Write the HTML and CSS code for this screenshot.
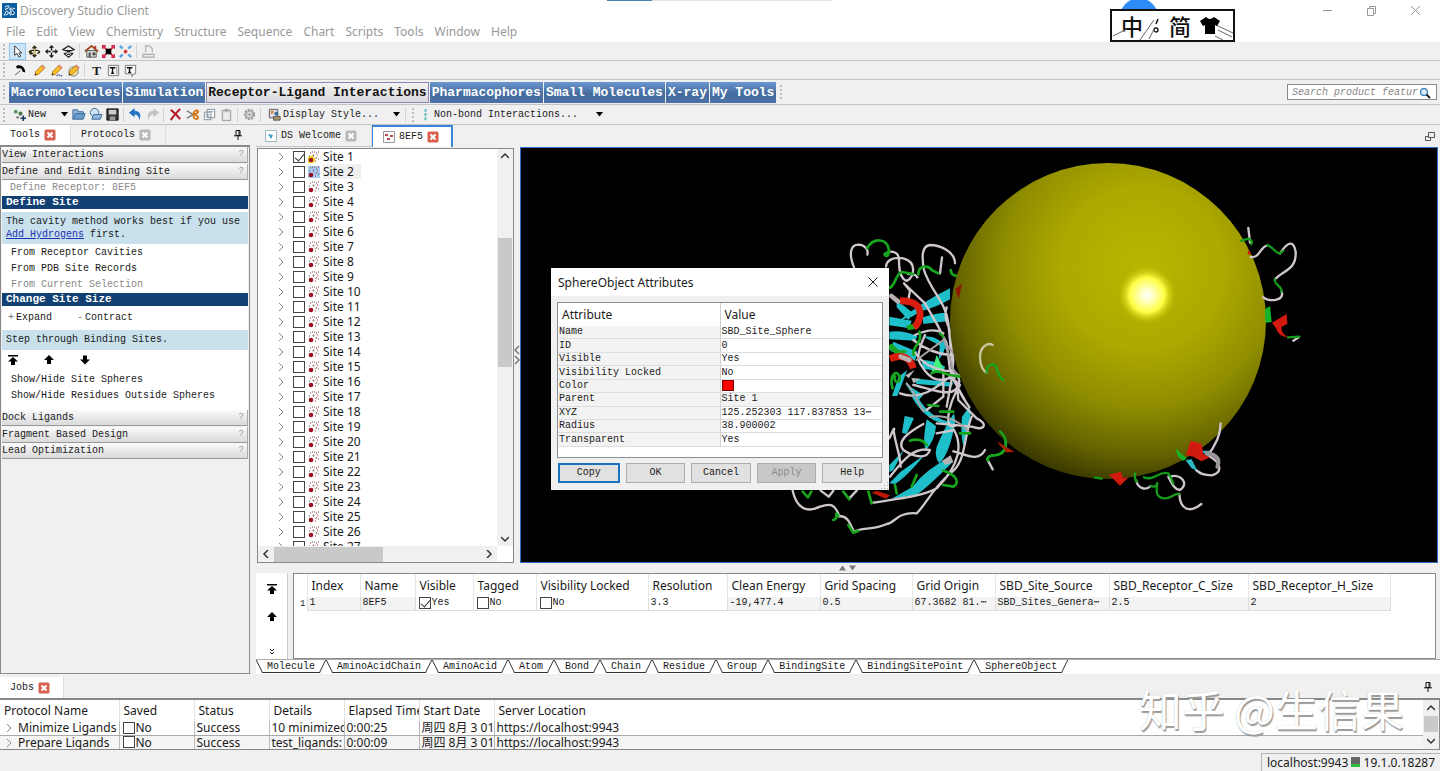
FILE: index.html
```html
<!DOCTYPE html>
<html lang="en">
<head>
<meta charset="utf-8">
<title>Discovery Studio Client</title>
<link rel="stylesheet" href="styles.css">
</head>
<body>
<svg class="defs" aria-hidden="true">
  <symbol id="site" viewBox="0 0 12 12"><circle cx="3" cy="9" r="2.3" fill="#9b1020"/><path d="M5 6l4-4M7 8l3-3M4 4l3 3" stroke="#9a9a9a" stroke-width="1" stroke-dasharray="1 1"/><path d="M2 2h1M6 1h1M9 4h1M5 4h1M8 7h1M7 10h1M10 1h1" stroke="#a33" stroke-width="1"/><path d="M4 1h1M1 5h1M8 2h1M10 8h1" stroke="#555" stroke-width="1"/></symbol>
  <symbol id="close" viewBox="0 0 12 12"><rect x=".5" y=".5" width="11" height="11" rx="1.5" fill="currentColor"/><path d="M3.5 3.5l5 5M8.5 3.5l-5 5" stroke="#fff" stroke-width="2"/></symbol>
  <symbol id="pin" viewBox="0 0 8 10"><path d="M2 .5h4v5H2zM5 1v4M0 5.8h8M4 6v4" stroke="#111" fill="none"/></symbol>
  <symbol id="up" viewBox="0 0 10 10"><path d="M5 0l5 5H7v4H3V5H0z"/></symbol>
  <symbol id="down" viewBox="0 0 10 10"><path d="M5 9.500l5-5H7v-4H3v4H0z"/></symbol>
  <symbol id="top" viewBox="0 0 10 10"><path d="M0 0h10v1.500H0zM5 2l5 4.500H7V10H3V6.500H0z"/></symbol>
  <symbol id="drop" viewBox="0 0 7 5"><path d="M0 0h7L3.500 4.500z"/></symbol>
  <symbol id="pencil" viewBox="0 0 16 16"><path d="M3 13l1-4 7-7 3 3-7 7z" fill="#f6bf26" stroke="#a9630b" stroke-width=".8"/><path d="M11 2l3 3-1.500 1.500-3-3z" fill="#e88f7a"/><path d="M3 13l.5-2 1.500 1.500z" fill="#222"/></symbol>
</svg>
<div class="app">
  <header class="titlebar">
    <svg class="logo" viewBox="0 0 15 15"><rect width="15" height="15" fill="#0b5fa0"/><path d="M3 4c3-2 6-1 3 1L3 6.500M3.500 12c3 0 4-4 1-4L2 12.500M8 7v-2M9 8.500c-2 0-2 3.500 0 3.500V4.500M13 5.500c-3-1-3 2-1.500 3s1 3.500-1.500 3" fill="none" stroke="#fff" stroke-width="1"/></svg>
    <h1>Discovery Studio Client</h1>
    <div class="strip"></div>
    <div class="winctl">
      <button aria-label="Minimize"><svg viewBox="0 0 11 11"><path d="M1 5.500h9"/></svg></button>
      <button aria-label="Restore"><svg viewBox="0 0 11 11"><path d="M1.500 3.500h6v7h-6zM3.500 3.500v-2h6v7h-2"/></svg></button>
      <button aria-label="Close"><svg viewBox="0 0 11 11"><path d="M1 1l9 9M10 1l-9 9"/></svg></button>
    </div>
    <div class="ime"><span class="ball"></span><div class="ime-box">
      <svg class="rays" viewBox="0 0 121 29" preserveAspectRatio="none"><path d="M1 25l14-7M28 29l14-20M37 28l6-12M104 14l17 8M106 19l14 7M103 25l8 4" stroke="#666" fill="none"/></svg>
      <span>中</span><svg class="punct" viewBox="0 0 8 16"><path d="M6 1L4 6M4 8" stroke="#111" stroke-width="1.500"/><circle cx="4" cy="12" r="2" fill="none" stroke="#111" stroke-width="1.300"/></svg><span>简</span>
      <svg class="shirt" viewBox="0 0 20 18"><path d="M0 4L6 0q4 4 8 0l6 4-3 5-2-1v9H5V8L3 9z"/></svg></div></div>
  </header>
  <nav class="menu"><button>File</button><button>Edit</button><button>View</button><button>Chemistry</button><button>Structure</button><button>Sequence</button><button>Chart</button><button>Scripts</button><button>Tools</button><button>Window</button><button>Help</button></nav>

  <div class="bar">
    <i class="grip"></i>
    <button class="ib on" aria-label="Select"><svg viewBox="0 0 16 16"><path d="M5 2v10l2.500-2 2 4 2-1-2-3.500h3z" fill="#fff" stroke="#333"/></svg></button>
    <button class="ib" aria-label="Rotate"><svg viewBox="0 0 16 16"><path d="M8 2.500v11M6 4.500l2-2 2 2M6 11.500l2 2 2-2M5 10C1 9 2 6.500 8 6.500s7 2.500 3 3.500M3 11l2.500-1L4 8" fill="none" stroke="#332b10" stroke-width="1.500"/><path d="M8 5v6" stroke="#e8c95a" stroke-width="1"/></svg></button>
    <button class="ib" aria-label="Translate"><svg viewBox="0 0 16 16"><path d="M8 2v12M2 8h12M6 4l2-2 2 2M6 12l2 2 2-2M4 6L2 8l2 2M12 6l2 2-2 2" fill="none" stroke="#222" stroke-width="1.400"/><path d="M7 7h2v2H7z" fill="#fff"/></svg></button>
    <button class="ib" aria-label="Zoom"><svg viewBox="0 0 16 16"><path d="M2 6l6-4 6 4-3 1H5zM3 10l5 4 5-4M3 10h3M13 10h-3M6 8.500h4M6.500 11h3" fill="none" stroke="#222" stroke-width="1.300"/></svg></button>
    <i class="sep"></i>
    <button class="ib" aria-label="Home"><svg viewBox="0 0 16 16"><path d="M3 7h10v7H3z" fill="#ddd" stroke="#555"/><path d="M1 8l7-6 7 6" fill="none" stroke="#9a4a20" stroke-width="2"/><path d="M11 2h2v3h-2z" fill="#b33"/><path d="M5 9h2v5H5zM9 9h3v3H9z" fill="#444"/></svg></button>
    <button class="ib" aria-label="Fit"><svg viewBox="0 0 16 16"><path d="M2 2l12 12M14 2L2 14" stroke="#d6274a" stroke-width="1.600"/><path d="M2 5V2h3M11 2h3v3M14 11v3h-3M5 14H2v-3" fill="none" stroke="#d6274a" stroke-width="1.800"/><path d="M5 5h6v6H5z"/></svg></button>
    <button class="ib" aria-label="Center"><svg viewBox="0 0 16 16"><path d="M2 2l3 3M14 2l-3 3M2 14l3-3M14 14l-3-3" stroke="#5aa2dd" stroke-width="2.500"/><path d="M8 6v4M6 8h4" stroke="#c33" stroke-width="2"/></svg></button>
    <i class="sep"></i>
    <button class="ib" aria-label="Export"><svg viewBox="0 0 16 16"><path d="M5 9V2h4l3 3v4M2 11h12v3H2z" fill="#eee" stroke="#aaa" stroke-width="1.200"/></svg></button>
  </div>
  <div class="bar">
    <i class="grip"></i>
    <button class="ib wide" aria-label="Lasso"><svg viewBox="0 0 16 16"><path d="M3 4c4-4 10 0 10 6l-3-1C10 6 8 5 5 6z"/><path d="M2 13l6-5" stroke="#555"/></svg></button>
    <button class="ib" aria-label="Sketch"><svg viewBox="0 0 16 16"><use href="#pencil"/></svg></button>
    <button class="ib" aria-label="Chain"><svg viewBox="0 0 16 16"><use href="#pencil"/><path d="M8 14l2-2 2 2 3-1" fill="none" stroke="#57a" stroke-width="1.500" stroke-dasharray="2 1"/></svg></button>
    <button class="ib" aria-label="Ring"><svg viewBox="0 0 16 16"><circle cx="8" cy="9" r="5" fill="#eee0a0" stroke="#777"/><use href="#pencil"/></svg></button>
    <i class="sep"></i>
    <button class="ib tt">T</button>
    <button class="ib" aria-label="Text box"><svg viewBox="0 0 16 16"><path d="M2.500 2.500h11v11h-11z" fill="#f8f8f8" stroke="#777"/><path d="M4 5h6M7 5v6M5.500 11h3" stroke="#111" stroke-width="1.500"/><path d="M11.500 4v8" stroke="#888"/></svg></button>
    <button class="ib" aria-label="Label"><svg viewBox="0 0 16 16"><path d="M2.500 2.500h11v9h-2l-2 3v-3h-7z" fill="#f8f8f8" stroke="#777"/><path d="M4 5h6M7 5v5M5.500 10h3" stroke="#111" stroke-width="1.500"/></svg></button>
  </div>
  <div class="bar suites">
    <i class="grip"></i>
    <button>Macromolecules</button><button>Simulation</button><button class="cur">Receptor-Ligand Interactions</button><button>Pharmacophores</button><button>Small Molecules</button><button>X-ray</button><button>My Tools</button>
    <i class="grip end"></i>
    <label class="search"><input type="text" placeholder="Search product featur" aria-label="Search product features"><svg viewBox="0 0 12 12"><circle cx="5" cy="5" r="3.500" fill="#d8ecfa" stroke="#4a84b4" stroke-width="1.500"/><path d="M7.500 7.500L11 11" stroke="#222" stroke-width="2"/></svg></label>
  </div>
  <div class="bar cmds">
    <i class="grip"></i>
    <button class="ib new"><svg viewBox="0 0 16 16"><circle cx="4" cy="5" r="2" fill="#5a8f5a"/><circle cx="9" cy="7" r="2.200" fill="#47794a"/><circle cx="6" cy="11" r="1.500" fill="#888"/><path d="M9 12h6M12 9v6" stroke="#223a66" stroke-width="1.800"/></svg>New<svg class="dd" viewBox="0 0 7 5"><use href="#drop"/></svg></button>
    <button class="ib" aria-label="Open"><svg viewBox="0 0 16 16"><path d="M2 13V3h5l1 2h5v2" fill="#8fb4d8" stroke="#3b6898"/><path d="M2 13l3-6h10l-2 6z" fill="#6a9ccb" stroke="#3b6898"/></svg></button>
    <button class="ib" aria-label="Open URL"><svg viewBox="0 0 16 16"><circle cx="7" cy="6" r="4.500" fill="#cfe4f5" stroke="#3b6898"/><path d="M4 13l2-5h9l-2 5z" fill="#8db7dd" stroke="#3b6898"/></svg></button>
    <button class="ib" aria-label="Save"><svg viewBox="0 0 16 16"><path d="M2 2h12v12H2z" fill="#333" stroke="#111"/><path d="M4 3h8v5H4z" fill="#ccc"/><path d="M5 10h6v4H5z" fill="#999"/></svg></button>
    <i class="sep"></i>
    <button class="ib" aria-label="Undo"><svg viewBox="0 0 16 16"><path d="M1 6l6-5v3c5 0 8 4 5 10 0-4-2-6-5-6v3z" fill="#2473c8"/></svg></button>
    <button class="ib" aria-label="Redo"><svg viewBox="0 0 16 16"><path d="M15 6L9 1v3c-5 0-8 4-5 10 0-4 2-6 5-6v3z" fill="#c4c4c4"/></svg></button>
    <i class="sep"></i>
    <button class="ib" aria-label="Delete"><svg viewBox="0 0 16 16"><path d="M3 3c4 3 7 6 10 10M13 2C9 6 6 9 3 14" stroke="#b81820" stroke-width="2.200" fill="none"/></svg></button>
    <button class="ib" aria-label="Cut"><svg viewBox="0 0 16 16"><path d="M2 4l8 5M2 12l8-5" stroke="#777" stroke-width="1.500"/><path d="M9 7c1-4 5-4 5-2s-3 2-4 3c1 1 4 1 4 3s-4 3-5-1z" fill="none" stroke="#d2781a" stroke-width="2"/></svg></button>
    <button class="ib" aria-label="Copy"><svg viewBox="0 0 16 16"><path d="M5.500 2.500h8v9h-8zM2.500 5.500h7v8h-7z" fill="#fff" stroke="#889"/><path d="M4 8h4M4 10h4M7 5h5" stroke="#79a"/></svg></button>
    <button class="ib" aria-label="Paste"><svg viewBox="0 0 16 16"><path d="M3.500 3.500h9v11h-9z" fill="#ddd" stroke="#999"/><path d="M6 2h4v3H6z" fill="#aaa"/><path d="M5 6h6v7H5z" fill="#eee"/></svg></button>
    <i class="sep"></i>
    <button class="ib" aria-label="Settings"><svg viewBox="0 0 16 16"><circle cx="8" cy="8" r="5" fill="none" stroke="#999" stroke-width="2" stroke-dasharray="2.500 1"/><circle cx="8" cy="8" r="3.500" fill="#ddd" stroke="#999"/><circle cx="8" cy="8" r="1.200" fill="#888"/></svg></button>
    <i class="sep"></i>
    <button class="ib style"><svg viewBox="0 0 16 16"><path d="M2.500 2.500h9v9h-9z" fill="#dde" stroke="#555"/><path d="M4 4h3v3H4z" fill="#c82"/><circle cx="10" cy="7" r="2" fill="#369"/><path d="M7 10h7v4H7z" fill="#a99468" stroke="#555"/></svg>Display Style...<svg class="dd" viewBox="0 0 7 5"><use href="#drop"/></svg></button>
    <i class="sep"></i><i class="grip"></i>
    <button class="ib nb"><svg viewBox="0 0 16 16"><path d="M8 2v12" stroke="#5bb" stroke-width="2" stroke-dasharray="3 1.500"/></svg>Non-bond Interactions...<svg class="dd" viewBox="0 0 7 5"><use href="#drop"/></svg></button>
  </div>

  <main class="main">
    <aside class="side">
      <div class="tabs">
        <button class="tab sel">Tools <svg class="cx red"><use href="#close"/></svg></button>
        <button class="tab">Protocols <svg class="cx"><use href="#close"/></svg></button>
        <svg class="pin"><use href="#pin"/></svg>
      </div>
      <div class="panel">
        <button class="sec">View Interactions<span>?</span></button>
        <button class="sec">Define and Edit Binding Site<span>?</span></button>
        <div class="sheet">
          <button class="item off first">Define Receptor: 8EF5</button>
          <h2>Define Site</h2>
          <p class="note gap">The cavity method works best if you use <a href="#add">Add Hydrogens</a> first.</p>
          <div class="items">
          <button class="item">From Receptor Cavities</button>
          <button class="item">From PDB Site Records</button>
          <button class="item off">From Current Selection</button>
          </div>
          <h2>Change Site Size</h2>
          <div class="size"><button><i>+</i>Expand</button><button><i>-</i>Contract</button></div>
          <p class="note">Step through Binding Sites.</p>
          <div class="steps"><button aria-label="First"><svg viewBox="0 0 10 10"><use href="#top"/></svg></button><button aria-label="Previous"><svg viewBox="0 0 10 10"><use href="#up"/></svg></button><button aria-label="Next"><svg viewBox="0 0 10 10"><use href="#down"/></svg></button></div>
          <div class="items last">
          <button class="item">Show/Hide Site Spheres</button>
          <button class="item">Show/Hide Residues Outside Spheres</button>
          </div>
        </div>
        <button class="sec">Dock Ligands<span>?</span></button>
        <button class="sec">Fragment Based Design<span>?</span></button>
        <button class="sec">Lead Optimization<span>?</span></button>
      </div>
    </aside>

    <section class="center">
      <div class="tabs docs">
        <button class="tab"><svg class="di" viewBox="0 0 12 12"><path d="M.5.5h11v11H.5z" fill="#fff" stroke="#9bb"/><path d="M3 4l5 1-2 4z" fill="#39a0c8"/></svg>DS Welcome <svg class="cx"><use href="#close"/></svg></button>
        <button class="tab sel"><svg class="di" viewBox="0 0 12 12"><path d="M.5.5h11v11H.5z" fill="#fff" stroke="#999"/><path d="M2 3h3v2H2zM7 4h3v2H7zM4 7h3v2H4z" fill="#b54a55"/></svg>8EF5 <svg class="cx red"><use href="#close"/></svg></button>
        <svg class="float" viewBox="0 0 10 10"><path d="M3.500.5h6v5h-6zM3 4.500H.5v4h5V6" fill="none" stroke="#555"/></svg>
      </div>
      <div class="work">
        <div class="tree">
          <ul class="sites" id="sites"></ul>
          <div class="vsb"><svg viewBox="0 0 8 8"><path d="M0 6l4-4 4 4"/></svg><span></span><svg viewBox="0 0 8 8"><path d="M0 2l4 4 4-4"/></svg></div>
          <div class="hsb"><svg viewBox="0 0 8 8"><path d="M6 0L2 4l4 4"/></svg><span></span><svg viewBox="0 0 8 8"><path d="M2 0l4 4-4 4"/></svg></div>
        </div>
        <div class="split"><svg viewBox="0 0 6 20"><path d="M5 1L1 5l4 4M1 11l4 4-4 4" fill="none" stroke="#777" stroke-width="1.500"/></svg></div>
        <div class="view">
          <svg class="scene" viewBox="521 148 916 414" preserveAspectRatio="xMidYMid meet">
            <defs>
              <radialGradient id="ball" gradientUnits="userSpaceOnUse" cx="1142" cy="268" r="232"><stop offset="0" stop-color="#b8b600"/><stop offset=".35" stop-color="#aca900"/><stop offset=".6" stop-color="#8f8d00"/><stop offset=".8" stop-color="#666400"/><stop offset="1" stop-color="#2a2900"/></radialGradient>
              <radialGradient id="glow"><stop offset="0" stop-color="#fff"/><stop offset=".2" stop-color="#ffffc8"/><stop offset=".6" stop-color="#ffff45"/><stop offset="1" stop-color="#c8c600" stop-opacity="0"/></radialGradient>
            </defs>
            <g transform="translate(780 220) scale(.333333)" fill="none" stroke-linecap="round" stroke-linejoin="round">
              <g fill="#1fbfc9">
                <path d="M510 205L510 238Q470 262 425 273L395 290 360 300Q420 250 510 205M428 292Q470 278 500 278L502 304 430 312M328 290L395 302 388 325 328 316M328 335Q370 330 412 348L406 362 328 358M340 365L412 395 405 422 330 392M350 240L400 280 385 300 350 262M424 420Q465 420 495 440L492 456 430 446M400 475Q450 480 520 488L515 500 410 492M568 560Q580 590 552 682 540 650 546 590M522 580L526 602Q510 700 478 730 462 710 470 680 500 610 522 580M512 712L516 728Q450 795 408 826L335 836 398 800Q440 745 512 712M434 704Q380 770 345 792L328 790 362 755M372 690L340 750 328 757 328 735M374 588L402 594 380 642 366 638M440 598L468 618Q465 660 438 690 426 670 440 598M395 530L412 528Q450 600 530 610 450 625 395 530M356 470L382 450 352 528 336 528M375 490L430 525 412 545M480 370L500 360 490 400 476 420M430 350Q480 345 500 390 470 370 430 350"/>
                <path d="M470 405L454 458 492 450" fill="#42f17d"/>
                <path d="M526 206L548 190 536 240M650 664L702 695 678 697M290 812L330 826 318 836 275 818" fill="#bd1607"/>
                <path d="M486 722L512 706 520 727 496 735M404 450L386 475 376 466M422 476L394 474 400 490" fill="#b5b5b5"/>
              </g>
              <g stroke="#cfc7cd" stroke-width="7">
                <path d="M222 142C205 100 212 74 235 74 256 75 266 90 262 104M330 95C350 95 357 105 357 120 357 150 360 175 380 183 405 170 410 125 370 115 340 110 320 120 318 140M372 190L390 212 386 235M384 162Q405 160 412 172M486 112L480 160M525 130C525 95 480 75 450 75 425 78 425 110 432 150 450 210 500 250 505 310L520 470C545 540 560 545 568 562M374 192L435 250 475 320 500 370 510 450M405 345Q460 320 490 340M500 262Q490 290 510 330 530 440 510 465M400 360Q450 400 510 405M435 345Q405 410 420 430C460 500 490 480 540 465M405 398Q440 450 520 455M360 520C440 550 500 470 522 462 540 470 545 490 525 510 500 530 430 500 400 495M530 485L535 540 590 595C625 610 615 635 575 620L470 610M520 450L500 560M490 450L490 530 440 570M540 495C500 560 490 640 530 615M515 470L560 550M340 628C350 690 360 700 362 740M328 655Q346 615 342 630M430 612C380 640 350 665 370 690 400 710 440 720 450 690 400 680 370 720 330 770M470 640L522 630C545 670 545 730 470 805 430 830 340 838 280 848M520 694C550 700 595 730 615 690M575 590C550 650 560 730 508 762 455 810 440 850 410 880 350 875 345 910 320 912 280 932 240 920 222 936 210 910 205 890 180 888M38 812C50 865 80 880 120 860 150 850 165 850 178 890M122 812L146 830 160 812M208 835L230 812M600 440Q590 380 615 373 630 370 640 375M600 430L612 458M622 718L638 748"/>
                <path d="M432 570C430 590 410 520 380 490M450 590Q520 580 570 640M410 420L490 360 520 400M490 350L520 450 540 470" stroke="#a7a2a6" stroke-width="6"/>
              </g>
              <g stroke="#17a51d" stroke-width="8">
                <path d="M262 84C280 52 320 55 326 86 330 110 315 112 314 102L328 94M330 203C347 195 345 165 365 156L400 162M415 163C415 135 445 135 455 150L475 160M512 150C515 170 525 165 538 170M418 335C430 370 390 385 402 405M330 385L350 395 375 395M338 505C325 460 355 445 360 475 360 490 340 490 345 470M455 460C475 445 500 465 510 465L540 470M445 555L475 558M480 575L520 575M480 340L490 350M540 640L570 640M390 662C410 655 430 660 440 675M490 752C520 760 545 785 520 800L490 795M410 765L395 800M345 795L350 820M265 815L275 850M68 815L84 832 94 815M190 815L208 838M160 900C180 895 160 868 175 888M205 915L220 938 235 933M620 458C620 425 645 430 650 445 655 462 660 475 670 480M655 634C690 660 680 700 650 705 635 705 622 710 622 720"/>
                <path d="M334 380L350 395M388 322L410 318" stroke-width="16"/>
              </g>
              <path d="M360 242Q426 242 420 290 414 315 402 322M330 416Q385 395 400 445" stroke="#d91d10" stroke-width="21" stroke-linecap="butt"/>
              <path d="M334 228L354 244M362 410L388 420" stroke="#b9b0b0" stroke-width="14"/>
            </g>
            <circle cx="1108" cy="321" r="158" fill="url(#ball)"/>
            <circle cx="1147" cy="295" r="29" fill="url(#glow)"/>
            <g transform="translate(780 220) scale(.333333)" fill="none" stroke-linecap="round" stroke-width="7">
              <path d="M638 375C620 365 600 385 600 410 600 440 612 455 620 458" stroke="#c9c7a0"/>
              <path d="M620 458C620 430 642 425 650 445 655 462 660 475 670 480M660 634C690 660 680 700 650 705 625 705 620 715 625 722" stroke="#17a51d"/>
              <path d="M526 206L546 192 536 236" fill="#931400"/><path d="M655 666L702 696 678 697" fill="#a32400"/>
            </g>
            <g transform="translate(1060 200) scale(.333333)" fill="none" stroke-linecap="round" stroke-width="7">
              <path d="M565 84L570 128M572 171C600 175 600 140 622 136M660 160C680 130 700 115 707 155 710 210 670 210 645 238M665 275C675 305 625 305 610 292M482 670C482 710 465 740 440 770M442 765C490 790 485 820 455 826 430 826 420 820 408 810M228 840C235 870 260 870 272 858M330 830C360 820 390 850 360 870 345 870 335 850 325 830M358 882C360 930 390 940 424 912M700 422L716 412" stroke="#cfc7cd"/>
              <path d="M544 122L565 116Q580 122 574 132M622 136C640 140 645 160 660 160L670 152M645 238C640 255 665 255 665 275M684 412L718 410M225 820C222 845 235 850 228 840M272 858C295 865 290 845 292 850 285 885 295 895 315 895 335 895 340 880 358 882M252 832C280 845 300 810 325 820Q335 835 340 850M105 833L125 836" stroke="#159b1c"/>
              <path d="M615 328L630 318 635 366 616 368M348 745Q360 760 380 775L370 782Q350 775 348 745" fill="#15b52b"/>
              <path d="M376 780L395 778 412 812 395 805M425 752L448 752 445 775" fill="#2bbac2"/>
              <path d="M636 368L680 342 682 372 665 380Q662 400 684 412 655 410 648 385M378 765L392 722 425 732 430 762 450 772 425 784 400 770M147 824L182 815 190 835 206 832 180 857M566 150L574 165 562 162" fill="#d31a10"/>
              <path d="M440 760C475 765 480 780 472 800" stroke="#9b969a" stroke-width="12"/>
            </g>
          </svg>
          <div class="dialog" role="dialog" aria-label="SphereObject Attributes">
            <div class="dtitle">SphereObject Attributes<button aria-label="Close"><svg viewBox="0 0 10 10"><path d="M.5.5l9 9M9.500.5l-9 9" stroke="#222"/></svg></button></div>
            <div class="dbox">
              <table class="attrs">
                <thead><tr><th>Attribute</th><th>Value</th></tr></thead>
                <tbody>
                <tr><td>Name</td><td>SBD_Site_Sphere</td></tr>
                <tr><td>ID</td><td>0</td></tr>
                <tr><td>Visible</td><td>Yes</td></tr>
                <tr><td>Visibility Locked</td><td>No</td></tr>
                <tr><td>Color</td><td><span class="swatch"></span></td></tr>
                <tr class="ro"><td>Parent</td><td>Site 1</td></tr>
                <tr><td>XYZ</td><td>125.252303 117.837853 13⋯</td></tr>
                <tr><td>Radius</td><td>38.900002</td></tr>
                <tr><td>Transparent</td><td>Yes</td></tr>
                </tbody>
              </table>
            </div>
            <div class="dbtns"><button class="def">Copy</button><button>OK</button><button>Cancel</button><button disabled>Apply</button><button>Help</button></div>
            <i class="size-grip"></i>
          </div>
        </div>
      </div>
      <div class="hsplit"><svg viewBox="0 0 20 6"><path d="M1 5.500L4.500.5 8 5.500zM11 .5l3.500 5 3.500-5z" fill="#777"/></svg></div>
      <div class="data">
        <div class="rownav"><button aria-label="First row"><svg viewBox="0 0 10 10"><use href="#top"/></svg></button><button aria-label="Previous row"><svg viewBox="0 0 10 10"><use href="#up"/></svg></button><button class="more" aria-label="More"><svg viewBox="0 0 6 8"><path d="M1 1l2 2 2-2M1 4l2 2 2-2" fill="none" stroke="#111"/></svg></button></div>
        <div class="grid">
          <table>
            <colgroup><col class="w13"><col class="w53"><col class="w55"><col class="w58"><col class="w63"><col class="w112"><col class="w79"><col class="w93"><col class="w92"><col class="w83"><col class="w114"><col class="w139"><col class="w142"></colgroup>
            <thead><tr><th></th><th>Index</th><th>Name</th><th>Visible</th><th>Tagged</th><th>Visibility Locked</th><th>Resolution</th><th>Clean Energy</th><th>Grid Spacing</th><th>Grid Origin</th><th>SBD_Site_Source</th><th>SBD_Receptor_C_Size</th><th>SBD_Receptor_H_Size</th></tr></thead>
            <tbody><tr><td class="rh">1</td><td class="sh">1</td><td class="sh">8EF5</td><td><label><input type="checkbox" checked>Yes</label></td><td><label><input type="checkbox">No</label></td><td><label><input type="checkbox">No</label></td><td>3.3</td><td class="sh">-19,477.4</td><td class="sh">0.5</td><td class="sh">67.3682 81.⋯</td><td class="sh">SBD_Sites_Genera⋯</td><td class="sh">2.5</td><td class="sh">2</td></tr></tbody>
          </table>
        </div>
      </div>
      <div class="sheets"><button>Molecule</button><button>AminoAcidChain</button><button>AminoAcid</button><button>Atom</button><button>Bond</button><button>Chain</button><button>Residue</button><button>Group</button><button>BindingSite</button><button>BindingSitePoint</button><button>SphereObject</button></div>
    </section>
  </main>

  <section class="jobs">
    <div class="tabs"><button class="tab sel">Jobs <svg class="cx red"><use href="#close"/></svg></button><svg class="pin"><use href="#pin"/></svg></div>
    <div class="jbody">
      <table>
        <colgroup><col class="w119"><col class="w75"><col class="w75"><col class="w75"><col class="w75"><col class="w75"><col></colgroup>
        <thead><tr><th>Protocol Name</th><th>Saved</th><th>Status</th><th>Details</th><th>Elapsed Time</th><th class="sorted">Start Date</th><th>Server Location</th></tr></thead>
        <tbody>
        <tr><td><svg class="tw" viewBox="0 0 6 8"><path d="M1 0l4 4-4 4"/></svg>Minimize Ligands</td><td><label><input type="checkbox">No</label></td><td>Success</td><td>10 minimized</td><td>0:00:25</td><td>周四 8月 3 01:</td><td>https://localhost:9943</td></tr>
        <tr><td><svg class="tw" viewBox="0 0 6 8"><path d="M1 0l4 4-4 4"/></svg>Prepare Ligands</td><td><label><input type="checkbox">No</label></td><td>Success</td><td>test_ligands:</td><td>0:00:09</td><td>周四 8月 3 01:</td><td>https://localhost:9943</td></tr>
        </tbody>
      </table>
      <div class="vsb"><svg viewBox="0 0 8 8"><path d="M0 6l4-4 4 4"/></svg><span></span><svg viewBox="0 0 8 8"><path d="M0 2l4 4 4-4"/></svg></div>
    </div>
    <div class="mark">知乎 @生信果</div>
  </section>
  <footer class="status"><div>localhost:9943 <i></i> 19.1.0.18287</div></footer>
</div>
<script src="app.js"></script>
</body>
</html>
```
FILE: app.js
```js
const list = document.getElementById('sites');
for (let n = 1; n <= 27; n++) {
  const li = document.createElement('li');
  if (n === 1) li.className = 'lit';
  if (n === 2) li.className = 'picked';
  li.innerHTML =
    '<svg class="tw" viewBox="0 0 6 8"><path d="M1 0l4 4-4 4"/></svg>' +
    '<label><input type="checkbox"' + (n === 1 ? ' checked' : '') + '>' +
    '<svg class="si"><use href="#site"/></svg><span>Site ' + n + '</span></label>';
  list.appendChild(li);
}
```
FILE: styles.css
```css
* { box-sizing: border-box; }
html, body { height: 100%; }
body { margin: 0; font: 12px/15px "Noto Sans", "Noto Sans CJK SC", sans-serif; color: #1a1a1a; background: #f0f0f0; overflow: hidden; }
button { font: inherit; color: inherit; border: 0; padding: 0; margin: 0; background: none; text-align: left; white-space: nowrap; }
svg { display: block; flex: none; }
ul, p, h1, h2 { margin: 0; padding: 0; }
.defs { position: absolute; width: 0; height: 0; }
.app { display: flex; flex-direction: column; height: 100vh; }

.titlebar { position: relative; display: flex; align-items: center; height: 21px; padding-left: 2px; background: #fff; flex: none; }
.logo { width: 15px; height: 15px; }
h1 { margin-left: 3px; font-size: 12px; font-weight: 400; color: #999; }
.strip { position: absolute; top: 0; left: 607px; width: 225px; height: 1px; background: linear-gradient(90deg, #4a80ae 45px, #e4e4e4 45px); }
.winctl { display: flex; margin-left: auto; gap: 33px; padding-right: 19px; }
.winctl svg { width: 11px; height: 11px; fill: none; stroke: #999; }
.ime { position: absolute; z-index: 5; right: 205px; top: 9px; width: 125px; height: 33px; }
.ball { position: absolute; left: 9px; top: -11px; width: 40px; height: 44px; border-radius: 50%; background: linear-gradient(#2d8cf5, #2d8cf5 50%, #ddd 90%); }
.ime-box { position: relative; display: flex; align-items: center; height: 33px; padding-left: 9px; gap: 9px; border: 2px solid #111; background: #fff; font: 500 22px/29px "Noto Sans CJK SC", sans-serif; color: #111; }
.rays { position: absolute; inset: 0; width: 100%; height: 100%; }
.punct { width: 8px; height: 16px; }
.shirt { width: 20px; height: 18px; position: relative; }

.menu { display: flex; align-items: center; gap: 11px; height: 21px; padding-left: 6px; background: #fff; color: #999; flex: none; }

.bar { display: flex; align-items: center; flex: none; height: 19px; border-bottom: 1px solid #c4c4c4; background: #f0f0f0; font: 10px/14px "Liberation Mono", monospace; }
.grip { width: 3px; height: 14px; margin: 0 3px; border-left: 2px dotted #bbb; flex: none; }
.sep { width: 1px; height: 14px; margin: 0 3px 0 2px; background: #d2d2d2; flex: none; }
.ib { display: flex; align-items: center; justify-content: center; width: 17px; height: 17px; flex: none; }
.ib svg { width: 15px; height: 15px; }
.ib .dd, .dd { width: 7px; height: 5px; margin-left: auto; }
.on { background: #cce4f7; box-shadow: inset 0 0 0 1px #90c8f0; }
.wide { width: 22px; }
.tt { font: bold 13px/15px "Liberation Serif", serif; }
.new { width: 61px; justify-content: flex-start; padding: 0 2px 0 3px; gap: 1px; }
.style { width: 139px; justify-content: flex-start; padding: 0 3px; gap: 1px; }
.nb { width: 185px; justify-content: flex-start; padding: 0; gap: 1px; }
.bar.suites { height: 25px; gap: 1px; }
.suites > .grip { margin-right: 2px; }
.suites > button { height: 21px; padding: 0 2px; background: linear-gradient(#6b97cf, #456c9f 55%, #4a72a6); color: #fff; font: bold 13px/22px "Liberation Mono", monospace; }
.suites > .cur { background: linear-gradient(#f4f4f4, #d8d8dc); box-shadow: inset 0 0 0 1px #8b86b5; color: #111; }
.search { position: relative; margin-left: auto; margin-right: 3px; width: 150px; height: 16px; }
.search input { display: block; width: 100%; height: 16px; padding: 0 12px 0 4px; border: 1px solid #888; background: #fff; font: italic 10px/14px "Liberation Mono", monospace; }
.search input::placeholder { color: #888; opacity: 1; }
.search svg { position: absolute; right: 6px; top: 3px; width: 12px; height: 12px; }
.bar.cmds { height: 20px; }

.main { display: flex; flex: 1; min-height: 0; gap: 6px; }
.tabs { display: flex; flex: none; height: 20px; font: 10px/20px "Liberation Mono", monospace; }
.tab { display: flex; align-items: center; gap: 4px; padding: 0 14px 0 10px; border-right: 1px solid #ddd; }
.tab.sel { background: #fff; }
.cx { width: 12px; height: 12px; color: #b8b8b8; }
.cx.red { color: #d8604f; }
.pin { width: 8px; height: 10px; margin: 5px 8px 0 auto; }

.side { display: flex; flex-direction: column; width: 250px; flex: none; }
.panel { flex: 1; min-height: 0; border: 1px solid #8a8a8a; border-width: 2px 1px 1px; padding: 0 1px; font: 10px/14px "Liberation Mono", monospace; }
.sec { display: flex; justify-content: space-between; width: 100%; height: 16px; line-height: 15px; margin-bottom: 1px; border-bottom: 1px solid #999; border-right: 1px solid #aaa; background: linear-gradient(#fafafa, #dadada); }
.sec + .sec { margin-bottom: 0; }
.sec span { padding-right: 3px; color: #999; font-size: 9px; }
.sheet { background: #fff; padding-bottom: 6px; }
.item { display: block; padding-left: 9px; line-height: 16px; }
.items { padding: 1px 0 0; }
.off { color: #888; }
.item.first { padding-left: 8px; }
h2 { padding-left: 4px; background: #124072; color: #fff; font-size: 11px; line-height: 13px; font-weight: 700; }
.note { padding: 3px 4px; background: #c8e1ed; line-height: 14px; }
.note.gap { margin-top: 3px; line-height: 13px; }
.note a { color: #1c2fb0; }
.size { display: flex; gap: 25px; padding: 5px 6px; }
.size i { font-style: normal; color: #777; margin-right: 2px; }
.steps { display: flex; gap: 26px; padding: 5px 6px 6px; }
.steps svg { width: 10px; height: 10px; }

.center { display: flex; flex-direction: column; flex: 1; min-width: 0; }
.docs { height: 22px; }
.docs .tab { padding: 0 14px 0 9px; border-bottom: 1px solid #c4c4c4; }
.docs .tab.sel { padding: 0 12px 0 10px; border-style: solid; border-color: #3a86d8; border-width: 2px 2px 0 1px; }
.di { width: 12px; height: 12px; }
.float { width: 10px; height: 10px; margin: 7px 5px 0 auto; }
.work { display: flex; flex: 1; min-height: 0; padding-right: 2px; }
.tree { display: grid; grid-template: minmax(0, 1fr) 16px / minmax(0, 1fr) 16px; width: 257px; margin-left: 1px; flex: none; margin-top: 1px; border: 1px solid #888; background: #fff; }
.sites { list-style: none; overflow: hidden; padding-left: 20px; }
.sites li, .sites label { display: flex; align-items: center; height: 15px; }
.tw { width: 6px; height: 8px; fill: none; stroke: #888; }
.sites label { margin-left: 9px; }
.si { width: 12px; height: 12px; margin: 0 3px; }
.sites span { padding-right: 7px; }
.lit .si { background: radial-gradient(circle at 3px 9px, #f5dc1e 4px, transparent 4px); }
.picked .si { background: #a8cdf4; }
.picked span { background: #f0f0f0; }
input[type=checkbox] { appearance: none; position: relative; flex: none; width: 12px; height: 12px; margin: 0; border: 1px solid #444; background: #fff; }
input[type=checkbox]:checked::after { content: ""; position: absolute; left: 3px; top: 0; width: 4px; height: 8px; border: solid #333; border-width: 0 1px 1px 0; transform: rotate(40deg); }
.vsb, .hsb { display: flex; align-items: center; background: #f0f0f0; }
.vsb { flex-direction: column; padding: 3px 0; }
.vsb svg, .hsb svg { width: 8px; height: 8px; fill: none; stroke: #333; stroke-width: 1.5; }
.vsb span { width: 14px; height: 33%; margin: 20% 0 auto; background: #c9c9c9; }
.tree .vsb span { margin-top: 78px; }
.hsb { padding: 0 4px; }
.hsb span { width: 109px; height: 15px; margin: 0 auto 0 4px; background: #c9c9c9; }
.split { display: flex; align-items: center; width: 6px; }
.split svg { width: 6px; height: 20px; }
.view { position: relative; flex: 1; min-width: 0; border: 1px solid #2b6cc4; background: #000; }
.scene { position: absolute; inset: 0; width: 100%; height: 100%; }

.dialog { position: absolute; left: 30px; top: 120px; width: 338px; padding-bottom: 7px; background: #f0f0f0; }
.dtitle { display: flex; align-items: center; justify-content: space-between; height: 28px; padding: 0 11px 0 7px; background: #fff; }
.dtitle svg { width: 10px; height: 10px; }
.dbox { margin: 6px 6px 5px; padding-bottom: 10px; border: 1px solid #888f99; background: #fff; }
table { border-collapse: collapse; table-layout: fixed; }
th { font-weight: 400; text-align: left; }
th, td { padding: 0; overflow: hidden; white-space: nowrap; }
.attrs { width: 100%; height: 144px; font: 10px/12px "Liberation Mono", monospace; }
.attrs th { height: 23px; padding-left: 4px; font: 12px/20px "Noto Sans", sans-serif; }
.attrs td { padding: 0 1px; border-bottom: 1px solid #ddd; }
.attrs td:first-child, .ro td { background: #f3f3f3; }
.attrs tr > :first-child { border-right: 1px solid #d0d0d0; }
.swatch { display: block; width: 12px; height: 11px; border: 1px solid #700; background: #f00; }
.dbtns { display: flex; gap: 6px; padding: 0 7px; }
.dbtns button { flex: 1; height: 20px; text-align: center; border: 1px solid #adadad; background: #e1e1e1; font: 10px/18px "Liberation Mono", monospace; }
.dbtns .def { border: 2px solid #1b73c0; line-height: 16px; }
.dbtns button:disabled { background: #c8c8c8; color: #8a8a8a; }
.size-grip { position: absolute; right: 1px; bottom: 1px; width: 8px; height: 8px; background: radial-gradient(#aaa 1px, transparent 1px) 0 0 / 3px 3px; clip-path: polygon(100% 0, 100% 100%, 0 100%); }

.hsplit { display: flex; justify-content: center; align-items: center; height: 10px; flex: none; }
.hsplit svg { width: 20px; height: 6px; }
.data { display: flex; flex: none; height: 86px; gap: 5px; padding-right: 4px; }
.rownav { display: flex; flex-direction: column; align-items: center; width: 32px; padding: 11px 0 3px; gap: 18px; background: #fff; border-right: 1px solid #ccc; }
.rownav svg { width: 10px; height: 10px; }
.rownav .more { margin-top: auto; }
.rownav .more svg { width: 6px; height: 8px; }
.grid { flex: 1; min-width: 0; border: 1px solid #888; background: #fff; overflow: hidden; }
.grid table { width: 1096px; }
.grid th { height: 23px; padding-left: 4px; border-right: 1px solid #e8e8e8; }
.grid td { height: 13px; padding-left: 2px; border-right: 1px solid #ddd; border-bottom: 1px solid #ddd; font: 10px/12px "Liberation Mono", monospace; }
.grid .rh { padding-left: 6px; font-size: 9px; border-bottom: 0; }
.sh { background: #f3f3f3; }
td label { display: flex; align-items: center; height: 12px; gap: 1px; padding-left: 1px; }
.w13 { width: 13px; } .w53 { width: 53px; } .w55 { width: 55px; } .w58 { width: 58px; } .w63 { width: 63px; } .w112 { width: 112px; } .w79 { width: 79px; } .w93 { width: 93px; } .w92 { width: 92px; } .w83 { width: 83px; } .w114 { width: 114px; } .w139 { width: 139px; } .w142 { width: 142px; } .w119 { width: 119px; } .w75 { width: 75px; }
.sheets { display: flex; flex: none; height: 15px; padding-bottom: 1px; background: #fff; font: 10px/14px "Liberation Mono", monospace; border-top: 1px solid #aaa; }
.sheets button { position: relative; padding: 0 11px; }
.sheets button::before, .sheets button::after { content: ""; position: absolute; top: 0; bottom: 0; border: solid #333; }
.sheets button::before { left: 3px; right: 50%; border-width: 0 0 1px 1px; transform: skewX(26deg); }
.sheets button::after { right: 3px; left: 50%; border-width: 0 1px 1px 0; transform: skewX(-26deg); }

.jobs { position: relative; flex: none; margin-top: 3px; }
.jobs .tabs { height: 21px; }
.jobs .tab { padding-right: 13px; }
.jbody { display: flex; border: solid #888; border-width: 2px 1px 1px 0; background: #fff; }
.jbody table { flex: 1; width: 100%; }
.jbody th { height: 21px; padding-left: 4px; border-right: 1px solid #e2e2e2; }
.jbody td { height: 14px; padding-left: 2px; line-height: 13px; border-right: 1px solid #bbb; border-bottom: 1px solid #aaa; }
.jbody tr:last-child td { background: #f5f5f5; border-bottom: 0; }
.jbody td:first-child { padding-left: 6px; }
.jbody td .tw { display: inline-block; margin-right: 6px; }
.jbody th:nth-child(n+7), .jbody td:nth-child(n+7) { border-right: 0; }
.jbody .vsb { width: 16px; padding: 4px 0; }
.jbody .vsb span { height: 16px; margin: 4px 0 auto; }
.mark { position: absolute; right: 36px; top: 9px; font: 43px/44px "Noto Sans CJK SC", sans-serif; color: #fff; text-shadow: 1px 2px 1px #999, 0 0 1px #bbb; }
.status { display: flex; justify-content: flex-end; flex: none; height: 21px; padding-top: 3px; }
.status div { padding: 0 5px; border: 1px solid #b5b5b5; border-width: 1px 0 0 1px; line-height: 17px; }
.status i { display: inline-block; width: 9px; height: 10px; background: linear-gradient(#666 70%, #2fbf3a 70%); }
```
